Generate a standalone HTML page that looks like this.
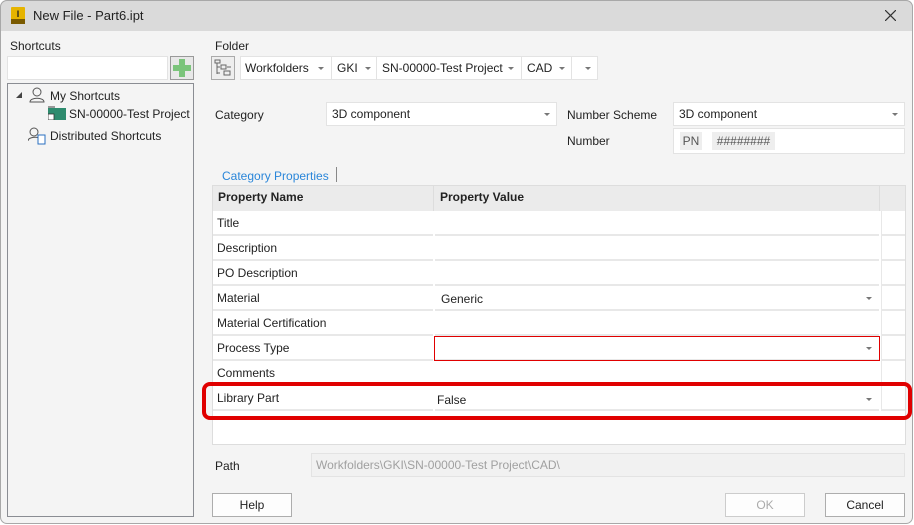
<!DOCTYPE html>
<html><head><meta charset="utf-8"><style>
*{box-sizing:border-box;margin:0;padding:0}
body{width:914px;height:525px;background:#fff;font-family:"Liberation Sans",sans-serif;font-size:12px;color:#222;position:relative;overflow:hidden}
.a{position:absolute}
.win{left:0;top:0;width:913px;height:524px;background:#f4f4f4;border-radius:7px;overflow:hidden}
.frame{left:0;top:0;width:913px;height:524px;border:1px solid #a8a8a8;border-radius:7px;pointer-events:none}
.tb{left:0;top:0;width:913px;height:31px;background:#dadada}
.box{background:#fff;border:1px solid #e3e3e3}
.arr{position:absolute;width:0;height:0;border-left:3px solid transparent;border-right:3px solid transparent;border-top:3px solid #777}
.cell{position:absolute;background:#fff;border-bottom:2px solid #e8e8e8}
.btn{background:#fdfdfd;border:1px solid #adadad;text-align:center;line-height:22px;font-size:12px}
</style></head><body>
<div class="a win">
<div class="a tb"></div>
<svg class="a" style="left:11px;top:7px" width="14" height="17"><rect width="14" height="17" rx="1" fill="#e6b400"/><rect y="12" width="14" height="5" fill="#7a5a00"/><text x="7" y="10" font-size="9" font-weight="bold" text-anchor="middle" fill="#222" font-family="Liberation Sans">I</text></svg>
<div class="a" style="left:33px;top:8px;font-size:13px;color:#222">New File - Part6.ipt</div>
<svg class="a" style="left:885px;top:10px" width="11" height="11"><path d="M0 0L11 11M11 0L0 11" stroke="#333" stroke-width="1.2"/></svg>

<div class="a" style="left:10px;top:39px">Shortcuts</div>
<div class="a box" style="left:7px;top:56px;width:161px;height:24px"></div>
<div class="a" style="left:170px;top:56px;width:24px;height:24px;border:1px solid #999;background:#e8e8e8"></div>
<svg class="a" style="left:173px;top:59px" width="18" height="18"><path d="M6 0h6v6h6v6h-6v6h-6v-6h-6v-6h6z" fill="#7bc47b"/></svg>
<div class="a" style="left:7px;top:83px;width:187px;height:434px;border:1px solid #8a8d93"></div>
<div class="a" style="left:16px;top:92px;width:0;height:0;border-left:6px solid transparent;border-bottom:6px solid #444"></div>
<svg class="a" style="left:29px;top:87px" width="16" height="16"><circle cx="8" cy="5" r="4" fill="none" stroke="#555"/><path d="M1 15c0-5 14-5 14 0z" fill="none" stroke="#555"/></svg>
<div class="a" style="left:50px;top:89px">My Shortcuts</div>
<svg class="a" style="left:48px;top:106px" width="18" height="14"><rect x="0" y="0" width="7" height="3" fill="#999"/><rect x="0" y="2" width="18" height="12" fill="#2e8b6e"/><rect x="0" y="8" width="6" height="6" fill="#fff" stroke="#333" stroke-width=".8"/></svg>
<div class="a" style="left:69px;top:107px">SN-00000-Test Project</div>
<svg class="a" style="left:28px;top:127px" width="18" height="18"><circle cx="6" cy="5" r="4" fill="none" stroke="#555"/><path d="M0 14c0-4 10-5 12-2" fill="none" stroke="#555"/><rect x="10" y="8" width="7" height="9" fill="#fff" stroke="#2a6fc0"/></svg>
<div class="a" style="left:50px;top:129px">Distributed Shortcuts</div>

<div class="a" style="left:215px;top:39px">Folder</div>
<div class="a" style="left:211px;top:56px;width:24px;height:24px;border:1px solid #aaa;background:#eee"></div>
<svg class="a" style="left:214px;top:59px" width="18" height="18"><g fill="none" stroke="#666"><rect x="1" y="1" width="5" height="3"/><path d="M3 4v11M3 8h3M3 14h3"/><rect x="7" y="6" width="5" height="4"/><rect x="10" y="12" width="6" height="4"/><path d="M13 8h4"/></g></svg>
<div class="a box" style="left:240px;top:56px;width:358px;height:24px"></div>
<div class="a" style="left:245px;top:61px">Workfolders</div><div class="arr" style="left:318px;top:67px"></div>
<div class="a" style="left:331px;top:57px;width:1px;height:22px;background:#e3e3e3"></div>
<div class="a" style="left:337px;top:61px">GKI</div><div class="arr" style="left:365px;top:67px"></div>
<div class="a" style="left:376px;top:57px;width:1px;height:22px;background:#e3e3e3"></div>
<div class="a" style="left:382px;top:61px">SN-00000-Test Project</div><div class="arr" style="left:508px;top:67px"></div>
<div class="a" style="left:521px;top:57px;width:1px;height:22px;background:#e3e3e3"></div>
<div class="a" style="left:527px;top:61px">CAD</div><div class="arr" style="left:559px;top:67px"></div>
<div class="a" style="left:571px;top:57px;width:1px;height:22px;background:#e3e3e3"></div>
<div class="arr" style="left:585px;top:67px"></div>

<div class="a" style="left:215px;top:108px">Category</div>
<div class="a box" style="left:326px;top:102px;width:231px;height:24px"></div>
<div class="a" style="left:332px;top:107px">3D component</div><div class="arr" style="left:544px;top:113px"></div>
<div class="a" style="left:567px;top:108px">Number Scheme</div>
<div class="a box" style="left:673px;top:102px;width:232px;height:24px"></div>
<div class="a" style="left:679px;top:107px">3D component</div><div class="arr" style="left:892px;top:113px"></div>
<div class="a" style="left:567px;top:134px">Number</div>
<div class="a box" style="left:673px;top:128px;width:232px;height:26px"></div>
<div class="a" style="left:680px;top:132px;width:22px;height:18px;background:#eee;text-align:center;line-height:18px;color:#555">PN</div>
<div class="a" style="left:712px;top:132px;width:63px;height:18px;background:#eee;text-align:center;line-height:18px;color:#555">########</div>

<div class="a" style="left:222px;top:169px;color:#2a86d9">Category Properties</div>
<div class="a" style="left:336px;top:167px;width:1px;height:15px;background:#888"></div>

<div class="a" style="left:212px;top:185px;width:694px;height:260px;background:#fff;border:1px solid #ddd"></div>
<div class="a" style="left:213px;top:186px;width:692px;height:25px;background:#ebebeb"></div>
<div class="a" style="left:433px;top:186px;width:1px;height:25px;background:#ddd"></div>
<div class="a" style="left:879px;top:186px;width:1px;height:25px;background:#ddd"></div>
<div class="a" style="left:218px;top:190px;font-weight:bold">Property Name</div>
<div class="a" style="left:440px;top:190px;font-weight:bold">Property Value</div>
<div id="rows"></div>
<script>
var names=["Title","Description","PO Description","Material","Material Certification","Process Type","Comments","Library Part"];
var h="";
for(var i=0;i<8;i++){var y=211+i*25;
h+='<div class="cell" style="left:213px;top:'+y+'px;width:220px;height:25px"></div>';
h+='<div class="cell" style="left:435px;top:'+y+'px;width:444px;height:25px"></div>';
h+='<div class="cell" style="left:881px;top:'+y+'px;width:24px;height:25px;border-left:1px solid #e8e8e8"></div>';
h+='<div class="a" style="left:217px;top:'+(y+5)+'px">'+names[i]+'</div>';}
document.getElementById("rows").outerHTML=h;
</script>
<div class="a" style="left:441px;top:292px">Generic</div><div class="arr" style="left:866px;top:297px"></div>
<div class="a" style="left:434px;top:336px;width:446px;height:25px;border:1px solid #e00000"></div><div class="arr" style="left:866px;top:347px"></div>
<div class="a" style="left:437px;top:393px">False</div><div class="arr" style="left:866px;top:398px"></div>
<div class="a" style="left:202px;top:382px;width:710px;height:38px;border:4px solid #e00000;border-radius:8px"></div>

<div class="a" style="left:215px;top:459px">Path</div>
<div class="a" style="left:311px;top:453px;width:594px;height:24px;background:#f1f1f1;border:1px solid #e3e3e3"></div>
<div class="a" style="left:316px;top:458px;color:#a0a0a0">Workfolders\GKI\SN-00000-Test Project\CAD\</div>
<div class="a btn" style="left:212px;top:493px;width:80px;height:24px">Help</div>
<div class="a btn" style="left:725px;top:493px;width:80px;height:24px;color:#aaa;border-color:#ccc">OK</div>
<div class="a btn" style="left:825px;top:493px;width:80px;height:24px">Cancel</div>
</div>
<div class="a frame"></div>
</body></html>
